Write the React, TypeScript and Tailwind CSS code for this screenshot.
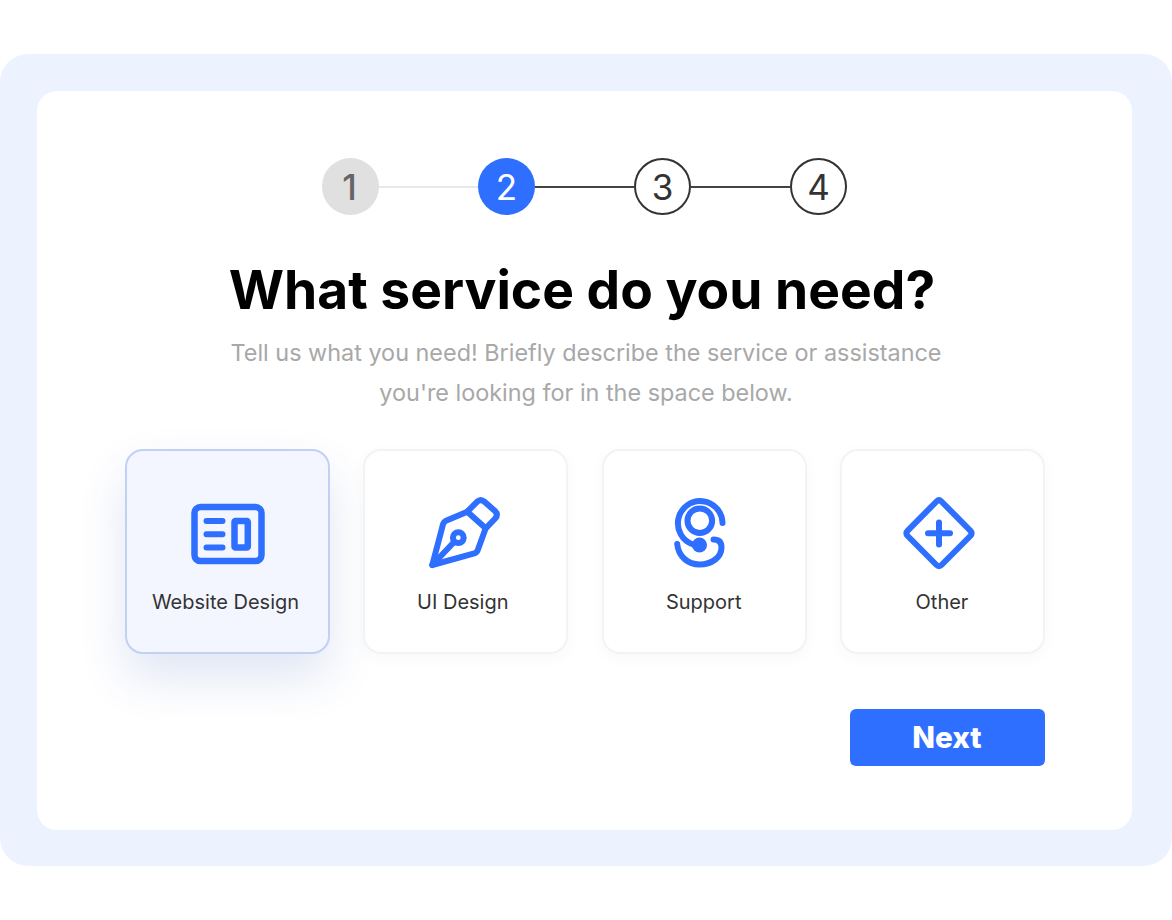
const steps = [
  { n: 1, cls: "bg-[#e0e0e0] text-[#666666] font-medium pr-[2px]" },
  { n: 2, cls: "bg-[#2e6fff] text-white" },
  { n: 3, cls: "border-2 border-[#333333] text-[#333333]" },
  { n: 4, cls: "border-2 border-[#333333] text-[#333333]" },
];

function WebIcon() {
  return (
    <svg viewBox="1 0 80 80" className="w-20 h-20" fill="none" stroke="#2e6fff" strokeWidth="6.5" strokeLinecap="round" strokeLinejoin="round">
      <rect x="7.5" y="13" width="67" height="54.1" rx="6" />
      <path d="M19.5 27H35.5M19.5 40.3H35.5M19.5 53.6H35.5" strokeWidth="6" />
      <rect x="47.5" y="27" width="13.3" height="26.6" rx="1" />
    </svg>
  );
}

function PenIcon() {
  return (
    <svg viewBox="1.5 0 80 80" className="w-20 h-20" fill="none" stroke="#2e6fff" strokeWidth="6" strokeLinecap="round" strokeLinejoin="round">
      <path d="M7.8 71 L18.6 30 Q19.3 27.8 21.5 26.8 L42.8 17.7 L52.5 7.8 Q56.2 4.4 60 7.8 L70.5 17 Q74.1 20.5 70.7 24.5 L61.2 34.3 L53.3 56 Q52.4 58.6 49.8 59.4 Z" />
      <path d="M42.8 17.7 L61.2 34.3" />
      <circle cx="33.8" cy="43.7" r="5.4" />
      <path d="M7.8 71 L29.8 47.8" />
    </svg>
  );
}

function SupportIcon() {
  return (
    <svg viewBox="0.5 0 80 80" className="w-20 h-20" fill="none" stroke="#2e6fff" strokeWidth="6" strokeLinecap="round" strokeLinejoin="round">
      <path d="M59 29 A22.3 22.3 0 1 0 29.5 50.5" />
      <circle cx="36.3" cy="26.7" r="12.3" />
      <path d="M13.7 50 C15 63 25 70.5 36 70.5 C48 70.5 58 63.5 58 53.5 C58 48 55 45.5 50 45.5" />
      <circle cx="36" cy="51" r="7.5" fill="#2e6fff" stroke="none" />
    </svg>
  );
}

function OtherIcon() {
  return (
    <svg viewBox="0 0 80 80" className="w-20 h-20" fill="none" stroke="#2e6fff" strokeWidth="6" strokeLinecap="round" strokeLinejoin="round">
      <path d="M34.5 7.5 Q37 5 39.5 7.5 L68.3 36.6 Q70.8 39.3 68.3 42 L39.5 71 Q37 73.5 34.5 71 L5.7 42 Q3.2 39.3 5.7 36.6 Z" />
      <path d="M37 28.5V50.5M26 39.3H48" />
    </svg>
  );
}

const services = [
  { label: "Website Design", icon: <WebIcon />, active: true, labelCls: "pr-[4px]" },
  { label: "UI Design", icon: <PenIcon />, active: false, labelCls: "pr-[6px]" },
  { label: "Support", icon: <SupportIcon />, active: false, labelCls: "pr-[1px]" },
  { label: "Other", icon: <OtherIcon />, active: false, labelCls: "pr-[1px]" },
];

export default function App() {
  return (
    <div className="h-[920px] bg-white pt-[54px] font-['Inter',sans-serif]">
      <div className="h-[812px] rounded-[28px] bg-[#ecf3ff] pl-[37px] pr-[40px] pt-[37px]">
        <div className="h-[739px] rounded-[20px] bg-white pt-[67px] flex flex-col items-center">
          <div className="flex items-center">
            {steps.map((s, i) => (
              <div key={s.n} className="flex items-center">
                {i > 0 && (
                  <div className={`w-[99px] h-[2px] mt-[1px] ${i === 1 ? "bg-[#e8e8e8]" : "bg-[#444444]"}`} />
                )}
                <div className={`w-[57px] h-[57px] rounded-full flex items-center justify-center pt-[2px] text-[35px] ${s.cls}`}>
                  {s.n}
                </div>
              </div>
            ))}
          </div>

          <h1 className="mt-[40px] -ml-[5px] text-[53.3px] leading-[70px] font-bold text-black">What service do you need?</h1>
          <p className="mt-[8px] ml-[3px] text-[23.4px] leading-[40px] text-[#a8a8a8] text-center">
            Tell us what you need! Briefly describe the service or assistance
            <br />
            you're looking for in the space below.
          </p>

          <div className="mt-[36px] ml-[1px] w-[920px] flex justify-between">
            {services.map((s) => (
              <div
                key={s.label}
                className={`w-[205px] h-[205px] rounded-[18px] border-2 flex flex-col items-center pt-[43px] ${
                  s.active
                    ? "bg-[#f4f6ff] border-[#c2d0f4] shadow-[0_24px_48px_rgba(46,80,180,0.14)]"
                    : "bg-white border-[#f3f3f3] shadow-[0_4px_16px_rgba(0,0,0,0.03)]"
                }`}
              >
                {s.icon}
                <div className={`mt-[12px] text-[20px] leading-[32px] text-[#333333] ${s.labelCls}`}>{s.label}</div>
              </div>
            ))}
          </div>

          <div className="mt-[55px] ml-[1px] w-[920px] flex justify-end">
            <button className="w-[195px] h-[57px] rounded-[6px] bg-[#2e6fff] text-white text-[29.7px] font-extrabold pr-[1px]">
              Next
            </button>
          </div>
        </div>
      </div>
    </div>
  );
}
